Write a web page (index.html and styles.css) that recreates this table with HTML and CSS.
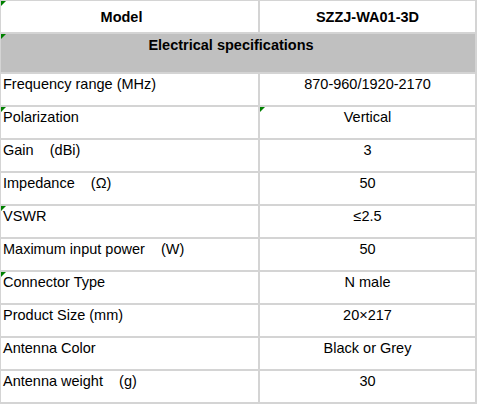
FILE: index.html
```html
<!DOCTYPE html>
<html>
<head>
<meta charset="utf-8">
<link rel="stylesheet" href="styles.css">
</head>
<body>
<div class="sheet">
  <div class="cell head mark model">Model</div>
  <div class="cell head center">SZZJ-WA01-3D</div>
  <div class="cell section mark">Electrical specifications</div>
  <div class="cell">Frequency range (MHz)</div>
  <div class="cell center">870-960/1920-2170</div>
  <div class="cell mark">Polarization</div>
  <div class="cell center mark">Vertical</div>
  <div class="cell">Gain    (dBi)</div>
  <div class="cell center">3</div>
  <div class="cell">Impedance    (Ω)</div>
  <div class="cell center">50</div>
  <div class="cell mark">VSWR</div>
  <div class="cell center">≤2.5</div>
  <div class="cell">Maximum input power    (W)</div>
  <div class="cell center">50</div>
  <div class="cell mark">Connector Type</div>
  <div class="cell center">N male</div>
  <div class="cell">Product Size (mm)</div>
  <div class="cell center">20×217</div>
  <div class="cell">Antenna Color</div>
  <div class="cell center">Black or Grey</div>
  <div class="cell">Antenna weight    (g)</div>
  <div class="cell center">30</div>
</div>
</body>
</html>
```
FILE: styles.css
```css
html, body {
  margin: 0;
  padding: 0;
  background: #ffffff;
}
.sheet {
  display: grid;
  grid-template-columns: 257px 215px;
  grid-template-rows: 31px 38px repeat(10, 31px);
  gap: 2px;
  padding: 1px 2px 2px 1px;
  width: 477px;
  box-sizing: border-box;
  background: #d4d4d4;
  font-family: "Liberation Sans", Arial, sans-serif;
  font-size: 14.5px;
  color: #000;
}
.cell {
  position: relative;
  background: #ffffff;
  padding: 2px 2px 0 2px;
  line-height: 17px;
  white-space: pre;
  overflow: hidden;
}
.center {
  text-align: center;
}
.head {
  font-weight: bold;
  padding-top: 8px;
}
.model {
  text-align: center;
  padding-right: 18px;
}
.section {
  grid-column: 1 / span 2;
  background: #c0c0c0;
  font-weight: bold;
  text-align: center;
  padding-top: 3px;
  padding-right: 16px;
}
.mark::before {
  content: "";
  position: absolute;
  top: 0;
  left: 0;
  width: 0;
  height: 0;
  border-top: 5px solid #008000;
  border-right: 5px solid transparent;
}
```
